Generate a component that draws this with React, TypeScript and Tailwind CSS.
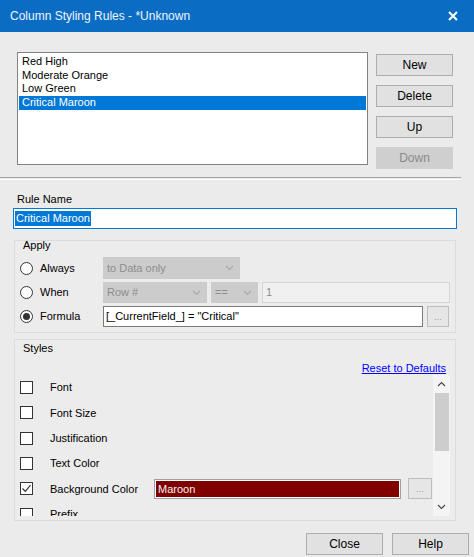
import React from 'react';

const font = { fontFamily: '"Liberation Sans", Arial, sans-serif' };

function Chevron({ up = false, className = '' }: { up?: boolean; className?: string }) {
  return (
    <svg width="9" height="6" viewBox="0 0 9 6" className={className}>
      <path d={up ? 'M1 5 L4.5 1.5 L8 5' : 'M1 1 L4.5 4.5 L8 1'} fill="none" stroke="currentColor" strokeWidth="1.1" />
    </svg>
  );
}

function Btn({ label, disabled = false, className = '' }: { label: string; disabled?: boolean; className?: string }) {
  return (
    <div
      className={
        'flex items-center justify-center h-[22px] text-[12px] border ' +
        (disabled ? 'bg-[#cfcfcf] border-[#cfcfcf] text-[#8a8a8a] ' : 'bg-[#e1e1e1] border-[#adadad] text-black ') +
        className
      }
    >
      {label}
    </div>
  );
}

function Combo({ label, width }: { label: string; width: string }) {
  return (
    <div className={'flex items-center justify-between h-full bg-[#cccccc] text-[#8c8c8c] pl-[4px] pr-[6px] ' + width}>
      <span>{label}</span>
      <Chevron className="text-[#a8a8a8]" />
    </div>
  );
}

function Radio({ checked = false }: { checked?: boolean }) {
  return (
    <div className="w-[13px] h-[13px] rounded-full border border-[#333] bg-white flex items-center justify-center shrink-0">
      {checked && <div className="w-[7px] h-[7px] rounded-full bg-[#333]" />}
    </div>
  );
}

function Check({ checked = false }: { checked?: boolean }) {
  return (
    <div className="w-[13px] h-[13px] border border-[#333] bg-white flex items-center justify-center shrink-0">
      {checked && (
        <svg width="11" height="11" viewBox="0 0 11 11">
          <path d="M1.5 5.5 L4.3 8.3 L9.5 2.2" fill="none" stroke="#333" strokeWidth="1.2" />
        </svg>
      )}
    </div>
  );
}

const rules = ['Red High', 'Moderate Orange', 'Low Green', 'Critical Maroon'];
const styles = ['Font', 'Font Size', 'Justification', 'Text Color', 'Background Color', 'Prefix'];

export default function App() {
  return (
    <div className="w-[474px] h-[557px] bg-[#ebebeb] flex flex-col overflow-hidden text-[11px] text-black" style={font}>
      {/* Title bar */}
      <div className="h-[32px] shrink-0 bg-[#0b6cc4] flex items-center justify-between pl-[10px] pr-[16px]">
        <span className="text-[12px] text-[#eef4fb]">Column Styling Rules - *Unknown</span>
        <svg width="10" height="10" viewBox="0 0 10 10">
          <path d="M1 1 L9 9 M9 1 L1 9" stroke="white" strokeWidth="2" />
        </svg>
      </div>

      {/* Rules list and buttons */}
      <div className="flex pl-[17px] pt-[20px] gap-[8px]">
        <div className="w-[351px] h-[113px] bg-white border border-[#828282] pt-[2px] px-[1px]">
          {rules.map((r, i) => (
            <div
              key={r}
              className={
                'h-[13.7px] leading-[13.7px] pl-[3px] ' + (i === 3 ? 'bg-[#0078d7] text-white' : '')
              }
            >
              {r}
            </div>
          ))}
        </div>
        <div className="w-[77px] flex flex-col gap-[9px] pt-[2px]">
          <Btn label="New" />
          <Btn label="Delete" />
          <Btn label="Up" />
          <Btn label="Down" disabled />
        </div>
      </div>

      {/* Separator */}
      <div className="mt-[8px] w-[461px] h-[3px] border-t border-[#a6a6a6] border-b border-b-white" />

      {/* Rule name */}
      <div className="pl-[17px] mt-[13px] h-[13px] leading-[13px]">Rule Name</div>
      <div className="ml-[13px] mt-[2px] w-[444px] h-[21px] bg-white border border-[#0078d7] flex items-center pl-[1px]">
        <span className="bg-[#0078d7] text-white px-[1px] leading-[15px]">Critical Maroon</span>
      </div>

      {/* Apply group */}
      <div className="ml-[14px] mt-[11px] w-[442px] h-[93px] border border-[#dcdcdc] bg-[#ececec] flex flex-col">
        <div className="pl-[8px] h-[12px] leading-[12px] mt-[-2px]">Apply</div>
        <div className="flex flex-col gap-[3px] mt-[6px] pl-[5px]">
          <div className="flex items-center h-[22px]">
            <div className="w-[83px] flex items-center gap-[7px]">
              <Radio />
              <span>Always</span>
            </div>
            <Combo label="to Data only" width="w-[137px]" />
          </div>
          <div className="flex items-center h-[21px]">
            <div className="w-[83px] flex items-center gap-[7px]">
              <Radio />
              <span>When</span>
            </div>
            <Combo label="Row #" width="w-[104px]" />
            <div className="w-[4px]" />
            <Combo label="==" width="w-[47px]" />
            <div className="w-[4px]" />
            <div className="w-[188px] h-full bg-[#f0f0f0] border border-[#d4d4d4] flex items-center pl-[3px] text-[#8c8c8c]">1</div>
          </div>
          <div className="flex items-center h-[21px]">
            <div className="w-[83px] flex items-center gap-[7px]">
              <Radio checked />
              <span>Formula</span>
            </div>
            <div className="w-[320px] h-full bg-white border border-[#7a7a7a] flex items-center pl-[2px]">
              [_CurrentField_] = "Critical"
            </div>
            <div className="w-[4px]" />
            <div className="w-[22px] h-full border border-[#bdbdbd] bg-[#e6e6e6] flex items-end justify-center pb-[4px] text-[9px] text-[#999] leading-none">
              ...
            </div>
          </div>
        </div>
      </div>

      {/* Styles group */}
      <div className="ml-[14px] mt-[6px] w-[442px] h-[182px] border border-[#dcdcdc] bg-[#ececec] flex flex-col">
        <div className="pl-[8px] h-[12px] leading-[12px] mt-[2px]">Styles</div>
        <div className="flex justify-end pr-[9px] mt-[8px] h-[12px] leading-[12px]">
          <span className="text-[#0000ff] underline">Reset to Defaults</span>
        </div>
        <div className="flex mt-[1px] h-[141px]">
          <div className="flex-1 overflow-hidden pl-[5px]">
            {styles.map((s, i) => (
              <div key={s} className="h-[25.3px] flex items-center">
                <Check checked={i === 4} />
                <span className="ml-[17px] w-[104px] shrink-0">{s}</span>
                {i === 4 && (
                  <>
                    <div className="w-[247px] h-[20px] border border-[#a0a0a0] p-[1px] bg-white">
                      <div className="w-full h-full bg-[#800000] text-[#f2f2f2] flex items-center pl-[2px]">Maroon</div>
                    </div>
                    <div className="ml-[7px] w-[24px] h-[21px] border border-[#bdbdbd] bg-[#e6e6e6] flex items-end justify-center pb-[4px] text-[9px] text-[#999] leading-none">
                      ...
                    </div>
                  </>
                )}
              </div>
            ))}
          </div>
          <div className="w-[17px] bg-[#f4f4f4] flex flex-col items-center text-[#444] mr-[5px]">
            <div className="h-[18px] flex items-center justify-center">
              <Chevron up />
            </div>
            <div className="w-[14px] h-[58px] bg-[#cdcdcd]" />
            <div className="flex-1" />
            <div className="h-[18px] flex items-center justify-center">
              <Chevron />
            </div>
          </div>
        </div>
      </div>

      {/* Bottom buttons */}
      <div className="flex justify-end gap-[9px] pr-[5px] mt-[12px]">
        <Btn label="Close" className="w-[77px]" />
        <Btn label="Help" className="w-[77px]" />
      </div>
    </div>
  );
}
